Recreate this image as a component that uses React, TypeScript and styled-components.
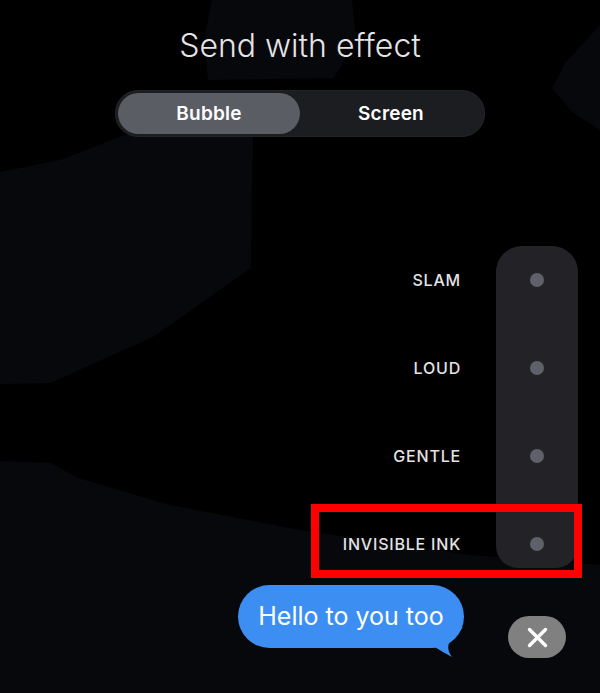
import React from 'react';
import styled, { createGlobalStyle } from 'styled-components';

const EFFECTS = ['SLAM', 'LOUD', 'GENTLE', 'INVISIBLE INK'];

const GlobalStyle = createGlobalStyle`
	html, body {
		margin: 0;
		padding: 0;
		background: #000;
	}
	body {
		font-family: Inter, 'Noto Sans', 'Liberation Sans', sans-serif;
		-webkit-font-smoothing: antialiased;
	}
`;

const App = () => (
	<>
		<GlobalStyle />
		<Screen>
			<Backdrop width="600" height="693" viewBox="0 0 600 693">
				<path d="M0 172 L60 160 L127 134 L250 112 L253 140 L251 268 L153 337 L50 383 L0 384 Z" />
				<path d="M212 0 L352 0 L356 40 L334 78 L208 80 L204 40 Z" />
				<path d="M600 25 L566 62 L552 88 L572 112 L600 130 Z" />
				<path d="M0 461 L50 463 L78 478 L170 505 L300 530 L470 555 L600 565 L600 693 L0 693 Z" />
			</Backdrop>

			<Title>Send with effect</Title>

			<Segmented>
				<Segment $active>Bubble</Segment>
				<Segment>Screen</Segment>
			</Segmented>

			<Picker>
				<Track />
				{EFFECTS.map((name, i) => (
					<React.Fragment key={name}>
						<EffectLabel $row={i + 1}>{name}</EffectLabel>
						<Dot $row={i + 1} />
					</React.Fragment>
				))}
				<Highlight />
			</Picker>

			<MessageRow>
				<Bubble>
					<BubbleText>Hello to you too</BubbleText>
					<Tail viewBox="0 0 226 80" width="226" height="80">
						<path d="M187 61 L195 61 C202 65 208 69 214 72 C210 67 209 61 212 56 C217 51 222 47 225 42 L195 58 Z" />
					</Tail>
				</Bubble>
				<CloseButton aria-label="Cancel">
					<svg width="21" height="21" viewBox="0 0 21 21">
						<path d="M2.5 2.5 L18.5 18.5 M18.5 2.5 L2.5 18.5" stroke="#fff" strokeWidth="3.4" strokeLinecap="round" />
					</svg>
				</CloseButton>
			</MessageRow>
		</Screen>
	</>
);

const Screen = styled.div`
	position: relative;
	z-index: 0;
	width: 600px;
	height: 693px;
	overflow: hidden;
	background: #000;
	display: flex;
	flex-direction: column;
	align-items: center;
`;

const Backdrop = styled.svg`
	position: absolute;
	top: 0;
	left: 0;
	z-index: -1;
	fill: #07080b;
`;

const Title = styled.h1`
	margin: 27px 0 0;
	font-size: 32px;
	line-height: 38px;
	font-weight: 300;
	color: #e4e4e6;
`;

const Segmented = styled.div`
	margin-top: 25px;
	width: 370px;
	height: 47px;
	box-sizing: border-box;
	padding: 3px;
	border-radius: 24px;
	background: #1c1d20;
	box-shadow: inset 0 0 0 1px #222327;
	display: grid;
	grid-template-columns: 1fr 1fr;
`;

const Segment = styled.div<{ $active?: boolean }>`
	display: flex;
	align-items: center;
	justify-content: center;
	border-radius: 21px;
	background: ${(p) => (p.$active ? '#5b5d64' : 'transparent')};
	color: #fff;
	font-size: 19px;
	font-weight: 600;
	letter-spacing: 0.2px;
`;

const Picker = styled.div`
	position: relative;
	align-self: flex-end;
	margin: 99px 22px 0 0;
	display: grid;
	grid-template-columns: auto 82px;
	grid-template-rows: repeat(4, 88px);
	column-gap: 35px;
`;

const Track = styled.div`
	grid-column: 2;
	grid-row: 1 / span 4;
	margin: 10px 0 20px;
	background: #232327;
	border-radius: 26px 26px 22px 22px;
`;

const EffectLabel = styled.div<{ $row: number }>`
	grid-column: 1;
	grid-row: ${(p) => p.$row};
	align-self: center;
	justify-self: end;
	font-size: 16px;
	font-weight: 500;
	letter-spacing: 0.8px;
	color: #e3e3e5;
`;

const Dot = styled.div<{ $row: number }>`
	grid-column: 2;
	grid-row: ${(p) => p.$row};
	align-self: center;
	justify-self: center;
	width: 14px;
	height: 14px;
	border-radius: 50%;
	background: #5f616a;
`;

const Highlight = styled.div`
	position: absolute;
	top: 268px;
	right: -4px;
	width: 271px;
	height: 74px;
	box-sizing: border-box;
	border: 8px solid #ff0000;
`;

const MessageRow = styled.div`
	align-self: stretch;
	display: flex;
	align-items: flex-start;
	margin-top: -3px;
	padding-left: 238px;
`;

const Bubble = styled.div`
	position: relative;
	width: 226px;
	height: 63px;
	border-radius: 32px;
	background: #3d8ef3;
	color: #fff;
	font-size: 25px;
	line-height: 63px;
	text-align: center;
	white-space: nowrap;
`;

const BubbleText = styled.span`
	position: relative;
	z-index: 1;
`;

const Tail = styled.svg`
	position: absolute;
	top: 0;
	left: 0;
	overflow: visible;
	fill: #3d8ef3;
`;

const CloseButton = styled.div`
	margin: 31px 0 0 44px;
	width: 58px;
	height: 42px;
	border-radius: 21px;
	background: #808080;
	display: flex;
	align-items: center;
	justify-content: center;
`;

export default App;
